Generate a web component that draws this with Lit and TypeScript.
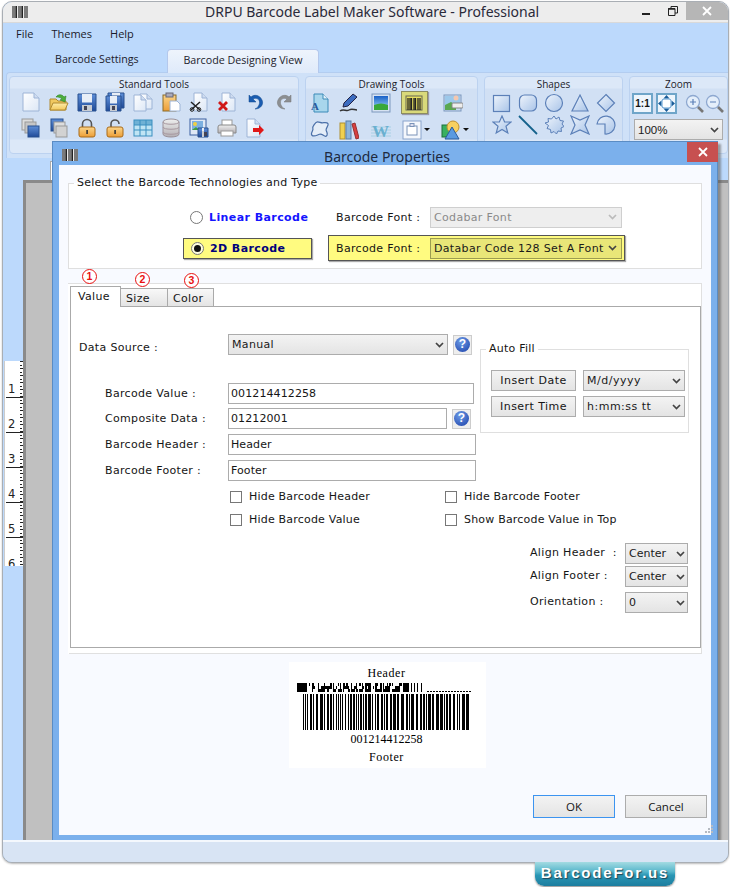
import { LitElement, html, css, svg } from "lit";
import { customElement } from "lit/decorators.js";

const ic = (body: any, w = 20, h = 20) => html`<svg class="ic" width=${w} height=${h} viewBox="0 0 ${w} ${h}">${body}</svg>`;

const page = (x = 3, y = 1, w = 15, h = 18) => svg`<path d="M${x} ${y}h${w - 5}l5 5v${h - 5}h-${w}z" fill="url(#gPage)" stroke="#9db4d6"/><path d="M${x + w - 5} ${y}v5h5" fill="#cfdcf0" stroke="#9db4d6"/>`;
const floppy = (x = 1, y = 2, w = 18, h = 17) => svg`<path d="M${x} ${y}h${w}v${h}h-${w}z" fill="url(#gBlue)" stroke="#28508f"/><rect x=${x + 4} y=${y} width=${w - 8} height=${h / 2} fill="#e8eef7"/><rect x=${x + 4} y=${y + h - 6} width=${w - 8} height="6" fill="#c8ccd2"/><rect x=${x + 6} y=${y + h - 5} width="3" height="4" fill="#445"/>`;
const lock = (open = false) => svg`<path d=${open ? "M6 10V6a4 4 0 0 1 8 0" : "M5.500 10V6a4.500 4.500 0 0 1 9 0v4"} fill="none" stroke="#555" stroke-width="1.600"/><rect x="2" y="9" width="16" height="10" rx="2" fill="url(#gOrange)" stroke="#a86a18"/><rect x="9.300" y="12" width="1.600" height="4" fill="#333"/>`;

const std1 = [
  ic(page(2, 1, 16, 18)),
  ic(svg`<path d="M1 7h6l2 2h8v9H1z" fill="#f0c860" stroke="#b08a30"/><path d="M1 18l3-7h15l-3 7z" fill="url(#gFolder)" stroke="#b08a30"/><path d="M7 5c2-3 6-3 8 0l2-1-1 6-5-2 2-1c-2-2-4-2-6-2z" fill="#4cae3c" stroke="#2f8426" stroke-width=".6"/>`),
  ic(floppy()),
  ic(svg`${floppy(3, 1, 16, 15)}${floppy(1, 4, 15, 15)}`),
  ic(svg`${page(7, 2, 12, 15)}${page(1, 3, 12, 16)}`),
  ic(svg`<rect x="2" y="3" width="13" height="16" fill="url(#gOrange)" stroke="#8a6a28"/><rect x="5" y="1" width="7" height="4" fill="#aab" stroke="#667"/><path d="M9 9h7l3 3v7H9z" fill="#fff" stroke="#9db4d6"/>`),
  ic(svg`${page(5, 1, 13, 18)}<path d="M2 10l9 8M11 10l-9 8" stroke="#222" stroke-width="1.500"/><circle cx="3" cy="17.500" r="1.800" fill="none" stroke="#222"/><circle cx="10" cy="17.500" r="1.800" fill="none" stroke="#222"/>`),
  ic(svg`${page(5, 1, 13, 18)}<path d="M2 10l8 8M10 10l-8 8" stroke="#d01818" stroke-width="2.800"/>`),
  ic(svg`<path d="M4 3v7h7l-3-3c4-2 8 1 6 6-1 2-2 3-4 4 6 0 9-5 7-9-2-5-8-6-11-3z" fill="#1a5cb0" stroke="#134a8f" stroke-width=".5"/>`),
  ic(svg`<path d="M18 3v7h-7l3-3c-4-2-8 1-6 6 1 2 2 3 4 4-6 0-9-5-7-9 2-5 8-6 11-3z" fill="#8c8f92" stroke="#777" stroke-width=".5"/>`),
];
const std2 = [
  ic(svg`<rect x="1" y="1" width="11" height="11" fill="#ddd" stroke="#999"/><rect x="4" y="4" width="11" height="11" fill="#c6c6c6" stroke="#999"/><rect x="7" y="8" width="11" height="11" fill="url(#gBlue)" stroke="#28508f"/>`),
  ic(svg`<rect x="2" y="1" width="12" height="12" fill="url(#gBlue)" stroke="#28508f"/><rect x="5" y="4" width="11" height="11" fill="#ddd" stroke="#999"/><rect x="7" y="8" width="11" height="11" fill="#d2d2d2" stroke="#999"/>`),
  ic(lock()),
  ic(lock(true)),
  ic(svg`<rect x="1" y="2" width="18" height="16" fill="#bfe4f4" stroke="#3a8fc0"/><path d="M7 2v16M13 2v16M1 7h18M1 12h18" stroke="#3a8fc0"/><rect x="1" y="2" width="18" height="5" fill="#3a8fc0" opacity=".6"/>`),
  ic(svg`<path d="M2 4c0-4 16-4 16 0v12c0 4-16 4-16 0z" fill="url(#gGray)" stroke="#9a9098"/><path d="M2 4c0 3 16 3 16 0M2 9c0 3 16 3 16 0M2 14c0 3 16 3 16 0" fill="none" stroke="#a898a0"/>`),
  ic(svg`<rect x="1" y="1" width="16" height="16" fill="#dfe8f5" stroke="#3a5f9f"/><rect x="3" y="3" width="11" height="9" fill="#7db0e0"/><circle cx="6" cy="6" r="2" fill="#f0d040"/><path d="M3 12l4-3 3 3z" fill="#40a040"/>${floppy(9, 10, 10, 9)}`),
  ic(svg`<rect x="5" y="2" width="10" height="6" fill="#fff" stroke="#999"/><path d="M1 9q0-2 2-2h14q2 0 2 2v6H1z" fill="url(#gGray)" stroke="#888"/><rect x="4" y="13" width="12" height="5" fill="#fff" stroke="#999"/>`),
  ic(svg`${page(2, 1, 13, 18)}<path d="M8 10h6V7l5 5-5 5v-3H8z" fill="#e01818"/>`),
];
const bars = svg`<path d="M4 5v12M6 5v12M7.500 5v12M10 5v12M11.500 5v12M14 5v12M16 5v12" stroke="#222" stroke-width="1.300"/>`;
const draw1 = [
  ic(svg`<path d="M4 1h9l5 5v13H4z" fill="#a8d6ec" stroke="#3a8ab8"/><path d="M13 1v5h5" fill="#e4f2fa" stroke="#3a8ab8"/><text x="1" y="17" class="svgA">A</text>`),
  ic(svg`<path d="M14 1l4 3-9 9-5 1 1-4z" fill="#3c6cc0" stroke="#224"/><path d="M1 18c4-3 6 1 9-1s5 0 8 0" fill="none" stroke="#333" stroke-width="1.500"/>`),
  ic(svg`<rect x="1" y="1" width="18" height="18" fill="#d6e2f2" stroke="#7d97bd"/><rect x="3" y="3" width="14" height="14" fill="url(#gSky)"/><path d="M3 12q7-3 14 0v5H3z" fill="#38a838"/>`),
  html`<span class="hl">${ic(svg`<rect x="2" y="3" width="16" height="14" fill="#e8e060" stroke="#665"/>${bars}`)}</span>`,
  ic(svg`<rect x="1" y="2" width="17" height="16" fill="#c9dcf2" stroke="#7d97bd"/><path d="M2 3h15v9H2z" fill="#9cc8ea"/><path d="M2 12l6-3 5 3v5H2z" fill="#5aa850"/><circle cx="13" cy="5" r="2.500" fill="#f4c8b0"/><rect x="9" y="10" width="11" height="5" rx="1" fill="#eee" stroke="#888"/>`),
];
const arrow = html`<i class="darr"></i>`;
const draw2 = [
  ic(svg`<path d="M8 2c2 0 3 1 5 1s5-1 6 1-3 5-2 7 2 5 0 6-4-3-7-2-6 3-8 1 2-5 1-7 3-7 5-7z" transform="scale(.95)" fill="#e4edf8" stroke="#4a6fa8" stroke-width="1.300"/>`),
  ic(svg`<rect x="1" y="3" width="5" height="16" fill="#f0d050" stroke="#b09030"/><rect x="7" y="1" width="5" height="18" fill="#8cb4dc" stroke="#5a7fa8"/><path d="M13 4l3-1 4 15-3 1z" fill="#d84040" stroke="#983030"/>`),
  ic(svg`<path d="M0 7h20M0 10h20M0 13h20M0 16h20" stroke="#a8d0e4"/><text x="1" y="17" class="svgW">W</text>`),
  html`<span class="arrwrap">${ic(svg`<rect x="1" y="1" width="18" height="18" fill="#f4f7fc" stroke="#8aa4cc"/><rect x="5" y="6" width="10" height="9" fill="#fff" stroke="#7a93b8"/><rect x="8" y="3.500" width="4" height="3" fill="#dde" stroke="#7a93b8"/>`)}${arrow}</span>`,
  html`<span class="arrwrap">${ic(svg`<rect x="1" y="5" width="10" height="12" fill="#38b060" stroke="#1c7038"/><circle cx="12" cy="7" r="6" fill="#f8d060" stroke="#c09030"/><path d="M11 7l7 12H4z" fill="#5a9ae0" stroke="#2c5c9c"/>`)}${arrow}</span>`,
];
const sh = (d: any) => ic(svg`${d}`);
const shapeAttr = 'url(#gShape)';
const shapes1 = [
  sh(svg`<rect x="1.500" y="2.500" width="16" height="16" fill=${shapeAttr} stroke="#5c80b8" stroke-width="1.200"/>`),
  sh(svg`<rect x="1.500" y="2" width="17" height="16" rx="5" fill=${shapeAttr} stroke="#5c80b8" stroke-width="1.200"/>`),
  sh(svg`<circle cx="10" cy="10" r="8.500" fill=${shapeAttr} stroke="#5c80b8" stroke-width="1.200"/>`),
  sh(svg`<path d="M10 2l8 16H2z" fill=${shapeAttr} stroke="#5c80b8" stroke-width="1.200"/>`),
  sh(svg`<path d="M10 1.500l8.500 8.500-8.500 8.500L1.500 10z" fill=${shapeAttr} stroke="#5c80b8" stroke-width="1.200"/>`),
];
const shapes2 = [
  sh(svg`<path d="M10 1l2.600 6h6.400l-5 4.200 1.800 6.800L10 14.400 4.200 18 6 11.200 1 7h6.400z" fill=${shapeAttr} stroke="#5c80b8" stroke-width="1.200"/>`),
  sh(svg`<path d="M1 1l18 18" stroke="#14628c" stroke-width="1.800"/>`),
  sh(svg`<path d="M10 1l2 3 3-2 1 3.500 3.500.5-1.500 3 2 2.500-3 1.500.5 3.500-3.500-.5-1.500 3-2.500-2.500-3 1.500-.5-3.500-3.500-1 1.500-3L1 8l3.500-1L4 3.500l3.500.5z" fill=${shapeAttr} stroke="#5c80b8"/>`),
  sh(svg`<path d="M1 1l9 4 9-4-4 9 4 9-9-4-9 4 4-9z" fill=${shapeAttr} stroke="#5c80b8" stroke-width="1.200"/>`),
  sh(svg`<path d="M1 9a9 9 0 1 1 8 10V9z" fill=${shapeAttr} stroke="#5c80b8" stroke-width="1.200"/>`),
];
const mag = (plus: boolean) => ic(svg`<circle cx="8" cy="8" r="6.500" fill="#e4eefa" stroke="#8ea8d0" stroke-width="1.300"/><path d="M5 8h6${plus ? "M8 5v6" : ""}" stroke="#5c80b8" stroke-width="1.200"/><path d="M13 13l5 5" stroke="#777" stroke-width="2.600"/>`);

const chev = html`<svg class="chev" width="9" height="6" viewBox="0 0 9 6"><path d="M1 1l3.500 3.500L8 1" fill="none" stroke="currentColor" stroke-width="1.700"/></svg>`;
const sel = (t: string, cls = "") => html`<div class="sel ${cls}"><span>${t}</span>${chev}</div>`;
const help = html`<span class="help"><span>?</span></span>`;
const logo = html`<svg class="logo" width="16" height="12" viewBox="0 0 16 12"><rect width="16" height="12" fill="#fff"/><path d="M1 0v12M3 0v12M4.500 0v12M7 0v12M9 0v12M10.500 0v12M13 0v12M15 0v12" stroke="#222" stroke-width="1.200"/></svg>`;

function rng(seed: number) { return () => (seed = (seed * 16807) % 2147483647) / 2147483647; }
const barRects = () => {
  const r = rng(77); const out: any[] = []; let x = 6;
  while (x < 172) { const w = 1 + Math.floor(r() * 2.6); out.push(svg`<rect x=${x} y="32" width=${Math.min(w, 172 - x)} height="36"/>`); x += w + 1 + Math.floor(r() * 1.5); }
  return out;
};
const stackRects = () => {
  const r = rng(12345); const out: any[] = [];
  out.push(svg`<rect x="0" y="21" width="10" height="9"/>`);
  let x = 12;
  while (x < 104) { for (let row = 0; row < 3; row++) { const w = 1 + Math.floor(r() * 3); if (r() > .2) out.push(svg`<rect x=${x} y=${21 + row * 3} width=${w} height="3"/>`); } x += 2 + Math.floor(r() * 2); }
  out.push(svg`<rect x="106" y="21" width="6" height="9"/><rect x="114" y="21" width="1" height="9"/><rect x="117" y="21" width="1" height="9"/><rect x="120" y="21" width="1" height="9"/><rect x="124" y="21" width="1" height="9"/>`);
  for (let dx = 130; dx < 173; dx += 3) out.push(svg`<rect x=${dx} y="29" width="2" height="1"/>`);
  return out;
};

@customElement("app-root")
export class AppRoot extends LitElement {
  static styles = css`
    :host { display: block; position: relative; width: 730px; height: 887px; overflow: hidden; background: #fff; font-family: "DejaVu Sans", Verdana, sans-serif; font-size: 11px; letter-spacing: .33px; color: #151515; }
    * { box-sizing: border-box; }
    .ic { display: block; flex: none; }
    .svgA { font: bold 11px "Liberation Serif", serif; fill: #2a5a9c; }
    .svgW { font: bold 17px "Liberation Serif", serif; fill: #6ab0d0; }
    .main { position: absolute; left: 2px; top: 1px; width: 727px; height: 862px; border: 1px solid #a9aeb4; border-radius: 10px; overflow: hidden; display: flex; flex-direction: column; background: #bcd9fc; box-shadow: 0 1px 2px #bbb; font-family: "Open Sans", "Noto Sans", sans-serif; letter-spacing: 0; }
    .titlebar { height: 21px; flex: none; background: #ededed; display: flex; align-items: center; position: relative; padding-left: 9px; border-bottom: 1px solid #d9d9d9; }
    .titlebar .logo { background: #fff; }
    .apptitle { position: absolute; left: 202px; top: 0; font-size: 14px; line-height: 20px; color: #2a2a3a; font-family: "Noto Sans", sans-serif; white-space: nowrap; }
    .winbtns { margin-left: auto; display: flex; height: 18px; align-self: flex-start; }
    .wb { width: 27px; display: flex; align-items: center; justify-content: center; }
    .wb.x { width: 42px; background: #b6b6b6; }
    .menu { height: 25px; flex: none; display: flex; align-items: center; padding: 0 0 5px 13px; gap: 18px; font-size: 11px; color: #1a1a2a; }
    .rtabs { height: 24px; flex: none; display: flex; align-items: flex-end; padding-left: 52px; font-size: 10.700px; color: #1c1c2c; }
    .rtab { height: 24px; line-height: 22px; width: 112px; }
    .rtab.on { width: 152px; text-align: center; background: linear-gradient(#eef4fc, #dfeafa); border: 1px solid #b4c8ec; border-bottom: none; border-radius: 4px 4px 0 0; height: 24px; margin-bottom: -1px; position: relative; z-index: 1; line-height: 20px; }
    .ribbon { height: 86px; flex: none; background: #cfe1f8; border-top: 1px solid #b3cdf0; margin-left: 3px; padding: 3px 0 0 2px; display: flex; gap: 6px; border-left: 1px solid #b3cdf0; border-radius: 4px 0 0 0; }
    .grp { height: 78px; border: 1px solid #bcd2f0; border-radius: 4px; background: linear-gradient(#dce8f8 0, #dce8f8 11px, #d1e0f4 12px, #d1e0f4 62px, #dce8f8 63px); display: flex; flex-direction: column; }
    .gt { height: 13px; line-height: 15px; font-size: 10px; text-align: center; color: #1b1b2b; flex: none; }
    .g1 { width: 290px; } .g2 { width: 173px; } .g3 { width: 139px; } .g4 { flex: 1; }
    .icons { display: grid; justify-items: center; align-items: center; }
    .g1 .icons { grid-template-columns: repeat(10, 28px); padding: 2px 0 0 7px; row-gap: 6px; grid-auto-rows: 20px; }
    .g2 .icons { grid-template-columns: 28px 30px 34px 32px 46px; padding-top: 2px; row-gap: 6px; grid-auto-rows: 21px; }
    .g3 .icons { grid-template-columns: repeat(5, 26px); padding: 3px 0 0 4px; row-gap: 2px; grid-auto-rows: 20px; }
    .hl { display: flex; align-items: center; justify-content: center; width: 27px; height: 23px; background: #d9d97a; border: 1px solid #8c8c60; box-shadow: 1px 1px 1px #99a; }
    .arrwrap { display: flex; align-items: center; gap: 2px; position: relative; left: 2px; }
    .darr { width: 0; height: 0; border: 3px solid transparent; border-top: 3px solid #111; border-bottom: none; }
    .zoomrow { display: flex; align-items: center; padding: 3px 0 0 2px; }
    .zb { width: 21px; height: 21px; border: 2px solid #6fa5c9; background: #eef5fc; display: flex; align-items: center; justify-content: center; margin-right: 3px; font: bold 10px "Liberation Sans", sans-serif; }
    .zgap { width: 5px; }
    .zsel { margin: 5px 0 0 4px; width: 89px; height: 19px; font-family: "Liberation Sans", sans-serif; font-size: 11.500px; }
    .work { flex: 1; display: flex; flex-direction: column; padding-top: 24px; position: relative; }
    .gray { position: absolute; left: 20px; top: 22px; right: 0; bottom: 0; background: #c0c0c0; border-left: 3px solid #8a8a8a; border-top: 3px solid #8a8a8a; }
    .sliver { position: absolute; left: 47px; top: 3px; width: 3px; height: 19px; background: #fff; border-left: 1px solid #aaa; border-top: 1px solid #aaa; }
    .ruler { position: absolute; left: 1px; top: 203px; display: block; }
    .rnum { font: 11.500px "DejaVu Sans", sans-serif; fill: #222; }
    .status { height: 22px; flex: none; background: #d8e4f4; border-top: 2px solid #f4f8fd; position: relative; z-index: 1; }

    .dlg { position: absolute; left: 52px; top: 141px; width: 666px; height: 702px; background: #7bb0ec; border: 1px solid #5a8cc4; box-shadow: 3px 3px 2px rgba(90,90,90,.55); display: flex; flex-direction: column; }
    .dt { height: 23px; flex: none; display: flex; align-items: center; padding: 3px 0 0 9px; position: relative; }
    .dtitle { position: absolute; left: 0; right: 0; text-align: center; font: 14px "Noto Sans", sans-serif; letter-spacing: 0; color: #1e2a40; top: 5px; padding-left: 4px; }
    .dx { margin: -3px -1px 0 auto; align-self: flex-start; width: 31px; height: 20px; background: #c75050; display: flex; align-items: center; justify-content: center; position: relative; }
    .dbody { flex: none; width: 652px; height: 670px; margin-left: 6px; background: #f8faff; padding: 11px 9px 0 9px; position: relative; }
    fieldset { margin: 0; padding: 0; border: 1px solid #dfdfdf; background: #fff; min-width: 0; display: block; }
    legend { margin-left: 5px; padding: 0 3px; line-height: 14px; font-size: 11px; letter-spacing: .23px; }
    .tech { height: 93px; padding-top: 14px; }
    .techrow { display: flex; align-items: center; height: 26px; margin-left: 114px; }
    .techrow + .techrow { margin-top: 5px; }
    .radio-part { width: 145px; height: 21px; display: flex; align-items: center; padding-left: 7px; gap: 6px; font-weight: bold; letter-spacing: .42px; }
    .radio-part.y { width: 129px; background: #fffb80; border: 1px solid #555; box-shadow: 1px 1px 1px #aaa; margin-right: 16px; color: #00007c; }
    .radio-part.b { color: #1414ff; }
    .radio { width: 13px; height: 13px; border-radius: 50%; border: 1px solid #777; background: #fff; display: flex; align-items: center; justify-content: center; flex: none; }
    .radio i { width: 7px; height: 7px; border-radius: 50%; background: #111; }
    .y .radio { background: #fffde0; }
    .font-part { width: 297px; height: 26px; display: flex; align-items: center; padding-left: 8px; }
    .font-part.y { background: #fffb80; border: 1px solid #555; box-shadow: 1px 1px 1px #aaa; padding-left: 7px; }
    .font-part > label { width: 94px; flex: none; }
    .sel { height: 21px; display: flex; align-items: center; justify-content: space-between; border: 1px solid #acacac; background: linear-gradient(#f3f3f3, #e4e4e4); padding: 0 3px 0 3px; color: #1a1a1a; white-space: nowrap; }
    .sel .chev { color: #444; flex: none; }
    .font-part .sel { width: 192px; padding-right: 4px; }
    .sel.dis { background: #eee; border-color: #cfcfcf; color: #8a8a8a; }
    .sel.dis .chev { color: #bbb; }
    .sel.ysel { background: #e9e678; border-color: #9c9c50; }
    .tabs { height: 371px; margin-top: 14px; border: 1px solid #e0e0e0; border-bottom: 0; border-left: 0; padding-left: 2px; position: relative; background: #fff; }
    .bottomline { position: absolute; left: 1px; right: 0; bottom: 0; height: 6px; background: #fff; border-bottom: 1px solid #e0e0e0; }
    .strip { height: 22px; display: flex; align-items: flex-end; }
    .tab { height: 18px; border: 1px solid #aaa; border-left: 0; border-bottom: 0; background: linear-gradient(#f8f8f8, #e4e4e4); display: flex; align-items: center; padding: 2px 0 0 5px; position: relative; }
    .tab.on { height: 21px; background: #fff; border-left: 1px solid #aaa; padding: 0 0 1px 7px; margin-bottom: -1px; z-index: 1; }
    .t1 { width: 51px; } .t2 { width: 47px; } .t3 { width: 46px; }
    .num { position: absolute; width: 15px; height: 15px; border: 1.500px solid #e81010; border-radius: 50%; color: #e81010; font: bold 10.500px/12px "Liberation Sans", sans-serif; letter-spacing: 0; text-align: center; background: #fff; }
    .t1 .num { left: 11px; top: -18px; } .t2 .num { left: 14px; top: -17px; } .t3 .num { left: 16px; top: -16px; }
    .panel { height: 342px; border: 1px solid #aaa; background: #fff; padding: 27px 0 0 8px; display: grid; grid-template-columns: 401px 1fr; align-content: start; }
    .frow { display: flex; align-items: center; height: 21px; }
    .frow label { flex: none; }
    .ds { width: 149px; padding-top: 5px; }
    .ds + .sel { width: 220px; }
    .frow .help { margin-left: 5px; }
    .help { width: 19px; height: 20px; border: 1px solid #ccc; background: #eee; display: flex; align-items: center; justify-content: center; flex: none; }
    .help span { width: 15px; height: 15px; border-radius: 50%; background: radial-gradient(circle at 40% 30%, #6d9be6, #1a3fa8); color: #fff; font: bold 12px/15px "Liberation Sans", sans-serif; text-align: center; }
    .fields { margin: 28px 0 0 26px; display: flex; flex-direction: column; }
    .fields .frow { margin-bottom: 4px; }
    .fields .frow:nth-child(2) { margin-bottom: 5px; }
    .fields .frow:nth-child(3) { margin-bottom: 5px; }
    .fields label { width: 123px; }
    input { height: 21px; border: 1px solid #acacac; background: #fff; padding: 0 2px; font: 11px "DejaVu Sans", sans-serif; letter-spacing: .1px; color: #151515; outline: none; }
    .w1 { width: 246px; } .w2 { width: 219px; } .w3 { width: 248px; }
    .checks { display: grid; grid-template-columns: 215px 1fr; margin: 5px 0 0 151px; row-gap: 10px; width: 480px; grid-column: 1 / 3; letter-spacing: .2px; }
    .ck { display: flex; align-items: center; gap: 7px; height: 13px; white-space: nowrap; }
    .ck i { width: 12px; height: 12px; border: 1px solid #777; background: #fff; flex: none; }
    .auto { height: 91px; margin-top: 8px; width: 209px; position: relative; }
    .auto legend { margin-left: 5px; }
    .afrow { display: flex; align-items: center; margin: 0 0 0 10px; height: 21px; }
    .afrow + .afrow { margin-top: 5px; }
    .afrow:first-of-type { margin-top: 14px; }
    .btn { height: 21px; border: 1px solid #acacac; background: linear-gradient(#f3f3f3, #e4e4e4); display: flex; align-items: center; justify-content: center; flex: none; }
    .afrow .btn { width: 85px; margin-right: 7px; letter-spacing: .45px; }
    .afrow .sel { width: 102px; letter-spacing: .5px; }
    .aligns { grid-column: 1 / 3; margin: 17px 0 0 451px; display: flex; flex-direction: column; }
    .al { display: flex; align-items: center; height: 21px; margin-bottom: 2px; }
    .al:nth-child(2) { margin-bottom: 5px; }
    .al label { width: 95px; flex: none; padding-bottom: 2px; }
    .al .sel { width: 63px; padding-right: 2px; letter-spacing: 0; }
    .preview { width: 197px; height: 106px; background: #fff; margin: 8px 0 0 221px; position: relative; display: flex; flex-direction: column; align-items: center; font-family: "Liberation Serif", serif; letter-spacing: 0; color: #000; font-size: 12px; }
    .preview .h { height: 20px; line-height: 22px; letter-spacing: .6px; padding-right: 2px; }
    .preview svg { flex: none; display: block; margin: 0 0 0 8px; align-self: flex-start; }
    .preview .n { height: 17px; line-height: 17px; margin-top: 1px; font-size: 12px; padding-right: 2px; }
    .preview .f { height: 18px; line-height: 18px; letter-spacing: .6px; padding-right: 2px; }
    .actions { display: flex; gap: 10px; margin: 27px 0 0 465px; }
    .actions .btn { width: 82px; height: 23px; font-family: "Open Sans", sans-serif; font-size: 11.500px; letter-spacing: 0; }
    .actions .btn.pri { border: 1px solid #3c94f0; }
    .grip { position: absolute; right: -3px; bottom: 1px; }
    .badge { position: absolute; left: 535px; top: 862px; width: 140px; height: 24px; border-radius: 0 0 9px 9px; background: linear-gradient(#a3dbe2 0, #57b6cb 40%, #2a96b4 55%, #1c7d9f 100%); box-shadow: 0 1px 2px #888; color: #fff; font: bold 15px/21px "Liberation Sans", sans-serif; letter-spacing: 1.800px; text-align: center; text-shadow: 1px 1px 1px #245; white-space: nowrap; }
    .defs { position: absolute; width: 0; height: 0; }
  `;

  render() {
    const ticks = [];
    for (let y = 0; y < 205; y += 3.5) ticks.push(svg`<rect x="16" y=${Math.round(y)} width=${Math.round(y) % 7 < 1 ? 3 : 2} height="1" fill="#222"/>`);
    return html`
      <svg class="defs"><defs>
        <linearGradient id="gPage" x1="0" y1="0" x2="1" y2="1"><stop offset="0" stop-color="#fff"/><stop offset="1" stop-color="#dce7f6"/></linearGradient>
        <linearGradient id="gBlue" x1="0" y1="0" x2="0" y2="1"><stop offset="0" stop-color="#5f8fd8"/><stop offset="1" stop-color="#1f4a98"/></linearGradient>
        <linearGradient id="gOrange" x1="0" y1="0" x2="0" y2="1"><stop offset="0" stop-color="#fbd58a"/><stop offset="1" stop-color="#ec9d36"/></linearGradient>
        <linearGradient id="gFolder" x1="0" y1="0" x2="0" y2="1"><stop offset="0" stop-color="#fdeca8"/><stop offset="1" stop-color="#f2c85c"/></linearGradient>
        <linearGradient id="gGray" x1="0" y1="0" x2="0" y2="1"><stop offset="0" stop-color="#eee"/><stop offset="1" stop-color="#b4b0b4"/></linearGradient>
        <linearGradient id="gSky" x1="0" y1="0" x2="0" y2="1"><stop offset="0" stop-color="#1860c8"/><stop offset="1" stop-color="#a8e0f8"/></linearGradient>
        <linearGradient id="gShape" x1="0" y1="0" x2="1" y2="1"><stop offset="0" stop-color="#eef4fc"/><stop offset="1" stop-color="#a9c4e8"/></linearGradient>
      </defs></svg>
      <div class="main">
        <div class="titlebar">
          ${logo}
          <span class="apptitle">DRPU Barcode Label Maker Software - Professional</span>
          <div class="winbtns">
            <span class="wb"><svg width="10" height="10" viewBox="0 0 10 10"><rect x="1" y="7" width="8" height="2" fill="#222"/></svg></span>
            <span class="wb"><svg width="10" height="10" viewBox="0 0 10 10"><path d="M.5 2.500h6.500v7H.5zM3 2.500V.5h6.500v6.500H7" fill="none" stroke="#222"/><path d="M0 3h7" stroke="#222" stroke-width="1.500"/></svg></span>
            <span class="wb x"><svg width="10" height="10" viewBox="0 0 10 10"><path d="M1 1l8 8M9 1L1 9" stroke="#fff" stroke-width="1.800"/></svg></span>
          </div>
        </div>
        <div class="menu"><span>File</span><span>Themes</span><span>Help</span></div>
        <div class="rtabs"><span class="rtab">Barcode Settings</span><span class="rtab on">Barcode Designing View</span></div>
        <div class="ribbon">
          <div class="grp g1"><div class="gt">Standard Tools</div><div class="icons">${std1}${std2}</div></div>
          <div class="grp g2"><div class="gt">Drawing Tools</div><div class="icons">${draw1}${draw2}</div></div>
          <div class="grp g3"><div class="gt">Shapes</div><div class="icons">${shapes1}${shapes2}</div></div>
          <div class="grp g4"><div class="gt">Zoom</div>
            <div class="zoomrow">
              <span class="zb">1:1</span>
              <span class="zb"><svg width="17" height="17" viewBox="0 0 17 17"><path d="M8.500 0l3 3.500h-6zM8.500 17l3-3.500h-6zM0 8.500l3.500-3v6zM17 8.500l-3.500-3v6z" fill="#1a5c98"/><rect x="4" y="4" width="9" height="9" rx="2" fill="#fff" stroke="#5a9ad0"/></svg></span>
              <span class="zgap"></span>${mag(true)}${mag(false)}
            </div>
            ${sel("100%", "zsel")}
          </div>
        </div>
        <div class="work">
          <div class="sliver"></div>
          <div class="gray"></div>
          <svg class="ruler" width="19" height="205" viewBox="0 0 19 205">
            <rect width="19" height="205" fill="#fff"/><rect width="1" height="205" fill="#ccc"/>
            ${ticks}
            ${[1, 2, 3, 4, 5, 6].map((n, i) => svg`<text x="4" y=${32 + i * 35} class="rnum">${n}</text>${i < 5 ? svg`<rect x="2" y=${36 + i * 35} width="17" height="1" fill="#222"/>` : ""}`)}
          </svg>
        </div>
        <div class="status"></div>
      </div>
      <div class="dlg">
        <div class="dt">${logo}<span class="dtitle">Barcode Properties</span>
          <span class="dx"><svg width="10" height="10" viewBox="0 0 10 10"><path d="M1 1l8 8M9 1L1 9" stroke="#fff" stroke-width="1.800"/></svg></span></div>
        <div class="dbody">
          <fieldset class="tech"><legend>Select the Barcode Technologies and Type</legend>
            <div class="techrow">
              <div class="radio-part b"><span class="radio"></span>Linear Barcode</div>
              <div class="font-part"><label>Barcode Font :</label>${sel("Codabar Font", "dis")}</div>
            </div>
            <div class="techrow">
              <div class="radio-part y"><span class="radio"><i></i></span>2D Barcode</div>
              <div class="font-part y"><label>Barcode Font :</label>${sel("Databar Code 128 Set A Font", "ysel")}</div>
            </div>
          </fieldset>
          <div class="tabs">
            <div class="bottomline"></div>
            <div class="strip">
              <div class="tab on t1"><span class="num">1</span>Value</div>
              <div class="tab t2"><span class="num">2</span>Size</div>
              <div class="tab t3"><span class="num">3</span>Color</div>
            </div>
            <div class="panel">
              <div>
                <div class="frow"><label class="ds">Data Source :</label>${sel("Manual")}${help}</div>
                <div class="fields">
                  <div class="frow"><label>Barcode Value :</label><input class="w1" value="001214412258"></div>
                  <div class="frow"><label>Composite Data :</label><input class="w2" value="01212001">${help}</div>
                  <div class="frow"><label>Barcode Header :</label><input class="w3" value="Header"></div>
                  <div class="frow"><label>Barcode Footer :</label><input class="w3" value="Footer"></div>
                </div>
              </div>
              <fieldset class="auto"><legend>Auto Fill</legend>
                <div class="afrow"><span class="btn">Insert Date</span>${sel("M/d/yyyy")}</div>
                <div class="afrow"><span class="btn">Insert Time</span>${sel("h:mm:ss tt")}</div>
              </fieldset>
              <div class="checks">
                <span class="ck"><i></i>Hide Barcode Header</span><span class="ck"><i></i>Hide Barcode Footer</span>
                <span class="ck"><i></i>Hide Barcode Value</span><span class="ck"><i></i>Show Barcode Value in Top</span>
              </div>
              <div class="aligns">
                <div class="al"><label>Align Header&nbsp; :</label>${sel("Center")}</div>
                <div class="al"><label>Align Footer :</label>${sel("Center")}</div>
                <div class="al"><label>Orientation :</label>${sel("0")}</div>
              </div>
            </div>
          </div>
          <div class="preview">
            <div class="h">Header</div>
            <svg width="180" height="48" viewBox="0 20 180 48" fill="#000" shape-rendering="crispEdges">${stackRects()}${barRects()}</svg>
            <div class="n">001214412258</div>
            <div class="f">Footer</div>
          </div>
          <div class="actions"><span class="btn pri">OK</span><span class="btn">Cancel</span></div>
          <svg class="grip" width="9" height="9" viewBox="0 0 9 9" fill="#b5bac2"><rect x="6" y="0" width="2" height="2"/><rect x="3" y="3" width="2" height="2"/><rect x="6" y="3" width="2" height="2"/><rect x="0" y="6" width="2" height="2"/><rect x="3" y="6" width="2" height="2"/><rect x="6" y="6" width="2" height="2"/></svg>
        </div>
      </div>
      <div class="badge">BarcodeFor.us</div>
    `;
  }
}
